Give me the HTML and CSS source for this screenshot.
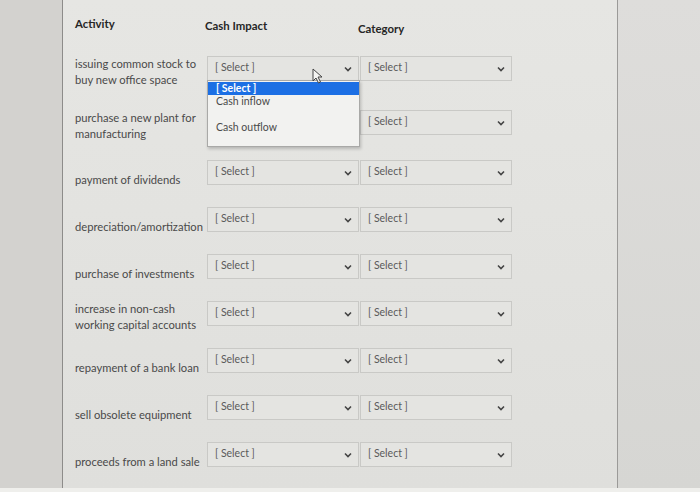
FILE: index.html
```html
<!DOCTYPE html>
<html lang="en">

<head>
    <meta charset="UTF-8">
    <meta name="viewport" content="width=device-width, initial-scale=1.0">
    <title>Cash Flow Activities</title>
    <link rel="stylesheet" href="styles.css">
</head>

<body>
    <div class="screen">
        <div class="panel">
            <div class="row header">
                <div class="col-title">Activity</div>
                <div class="col-title shift">Cash Impact</div>
                <div class="col-title shift cat">Category</div>
            </div>

            <div class="row first">
                <div class="label two">issuing common stock to<br>buy new office space</div>
                <div class="select open">
                    <span>[ Select ]</span>
                    <svg class="chev" viewBox="0 0 8 6"><polyline points="1,1.5 4,4.5 7,1.5"/></svg>
                    <svg class="cursor" viewBox="0 0 11 16"><path d="M1 1 L1 13 L4 10 L6.5 15 L8.5 14 L6 9 L10 9 Z"/></svg>
                    <ul class="dropdown">
                        <li class="active">[ Select ]</li>
                        <li>Cash inflow</li>
                        <li class="gap">Cash outflow</li>
                    </ul>
                </div>
                <div class="select">
                    <span>[ Select ]</span>
                    <svg class="chev" viewBox="0 0 8 6"><polyline points="1,1.5 4,4.5 7,1.5"/></svg>
                </div>
            </div>

            <div class="row second">
                <div class="label two">purchase a new plant for<br>manufacturing</div>
                <div class="select covered">
                    <span>[ Select ]</span>
                    <svg class="chev" viewBox="0 0 8 6"><polyline points="1,1.5 4,4.5 7,1.5"/></svg>
                </div>
                <div class="select">
                    <span>[ Select ]</span>
                    <svg class="chev" viewBox="0 0 8 6"><polyline points="1,1.5 4,4.5 7,1.5"/></svg>
                </div>
            </div>

            <div class="row">
                <div class="label">payment of dividends</div>
                <div class="select">
                    <span>[ Select ]</span>
                    <svg class="chev" viewBox="0 0 8 6"><polyline points="1,1.5 4,4.5 7,1.5"/></svg>
                </div>
                <div class="select">
                    <span>[ Select ]</span>
                    <svg class="chev" viewBox="0 0 8 6"><polyline points="1,1.5 4,4.5 7,1.5"/></svg>
                </div>
            </div>

            <div class="row">
                <div class="label">depreciation/amortization</div>
                <div class="select">
                    <span>[ Select ]</span>
                    <svg class="chev" viewBox="0 0 8 6"><polyline points="1,1.5 4,4.5 7,1.5"/></svg>
                </div>
                <div class="select">
                    <span>[ Select ]</span>
                    <svg class="chev" viewBox="0 0 8 6"><polyline points="1,1.5 4,4.5 7,1.5"/></svg>
                </div>
            </div>

            <div class="row">
                <div class="label">purchase of investments</div>
                <div class="select">
                    <span>[ Select ]</span>
                    <svg class="chev" viewBox="0 0 8 6"><polyline points="1,1.5 4,4.5 7,1.5"/></svg>
                </div>
                <div class="select">
                    <span>[ Select ]</span>
                    <svg class="chev" viewBox="0 0 8 6"><polyline points="1,1.5 4,4.5 7,1.5"/></svg>
                </div>
            </div>

            <div class="row">
                <div class="label two">increase in non-cash<br>working capital accounts</div>
                <div class="select">
                    <span>[ Select ]</span>
                    <svg class="chev" viewBox="0 0 8 6"><polyline points="1,1.5 4,4.5 7,1.5"/></svg>
                </div>
                <div class="select">
                    <span>[ Select ]</span>
                    <svg class="chev" viewBox="0 0 8 6"><polyline points="1,1.5 4,4.5 7,1.5"/></svg>
                </div>
            </div>

            <div class="row">
                <div class="label">repayment of a bank loan</div>
                <div class="select">
                    <span>[ Select ]</span>
                    <svg class="chev" viewBox="0 0 8 6"><polyline points="1,1.5 4,4.5 7,1.5"/></svg>
                </div>
                <div class="select">
                    <span>[ Select ]</span>
                    <svg class="chev" viewBox="0 0 8 6"><polyline points="1,1.5 4,4.5 7,1.5"/></svg>
                </div>
            </div>

            <div class="row">
                <div class="label">sell obsolete equipment</div>
                <div class="select">
                    <span>[ Select ]</span>
                    <svg class="chev" viewBox="0 0 8 6"><polyline points="1,1.5 4,4.5 7,1.5"/></svg>
                </div>
                <div class="select">
                    <span>[ Select ]</span>
                    <svg class="chev" viewBox="0 0 8 6"><polyline points="1,1.5 4,4.5 7,1.5"/></svg>
                </div>
            </div>

            <div class="row">
                <div class="label">proceeds from a land sale</div>
                <div class="select">
                    <span>[ Select ]</span>
                    <svg class="chev" viewBox="0 0 8 6"><polyline points="1,1.5 4,4.5 7,1.5"/></svg>
                </div>
                <div class="select">
                    <span>[ Select ]</span>
                    <svg class="chev" viewBox="0 0 8 6"><polyline points="1,1.5 4,4.5 7,1.5"/></svg>
                </div>
            </div>
        </div>
    </div>
    <div class="bezel"></div>
</body>

</html>
```

FILE: styles.css
```css
body {
    margin: 0;
    padding: 0;
    font-family: 'Lato', 'Liberation Sans', sans-serif;
    background: linear-gradient(to bottom, #d6d5d2, #c6c5c2);
    color: #3c3c3c;
}

.screen {
    display: flex;
    height: 488px;
    background: linear-gradient(to right, #d3d2cf 0, #d3d2cf 62px, transparent 62px),
        linear-gradient(to bottom, #dedddb, #d6d6d3);
    overflow: hidden;
}

.panel {
    margin-left: 62px;
    width: 556px;
    padding-left: 12px;
    box-sizing: border-box;
    background: linear-gradient(to bottom, #e6e6e3, #dfdfdc);
    border-left: 1px solid #8d8c8a;
    border-right: 1px solid #9b9a98;
}

.bezel {
    height: 4px;
    background: #efefec;
}

.row {
    display: grid;
    grid-template-columns: 131px 152px 152px;
    column-gap: 1px;
    height: 47px;
    align-items: start;
}

.row.header {
    height: 56px;
    padding-top: 17px;
    box-sizing: border-box;
    align-items: start;
}

.row.first {
    height: 54px;
}

.row.second {
    height: 50px;
}

.col-title {
    font-size: 11.4px;
    font-weight: 700;
    color: #262626;
}

.col-title.shift {
    margin-left: -2px;
    padding-top: 2px;
}

.col-title.cat {
    padding-top: 5px;
}

.label {
    font-size: 11.2px;
    line-height: 16px;
    color: #4a4a4a;
    padding-top: 12px;
    white-space: nowrap;
}

.label.two {
    padding-top: 0;
}

.select {
    position: relative;
    height: 25px;
    box-sizing: border-box;
    border: 1px solid #c9c9c6;
    background: #e4e4e1;
    display: flex;
    align-items: flex-start;
    justify-content: space-between;
    padding: 3px 6px 0 7px;
    font-size: 10.5px;
    line-height: 14px;
    color: #5a5a5a;
}

.select.covered span {
    visibility: hidden;
}

.chev {
    width: 8px;
    height: 6px;
    margin-top: 6px;
    fill: none;
    stroke: #444;
    stroke-width: 1.6;
}

.cursor {
    position: absolute;
    left: 104px;
    top: 11px;
    width: 11px;
    height: 16px;
    fill: #f4f4f2;
    stroke: #444;
    stroke-width: 1;
    z-index: 3;
}

.dropdown {
    position: absolute;
    top: 23px;
    left: -1px;
    width: 151px;
    height: 64px;
    margin: 0;
    padding: 1px 0 0;
    list-style: none;
    background: #f2f2f0;
    border: 1px solid #a9a9a7;
    box-shadow: 1px 2px 3px rgba(0, 0, 0, 0.2);
    z-index: 2;
}

.dropdown li {
    padding-left: 8px;
    font-size: 10.5px;
    line-height: 12px;
    color: #4a4a4a;
}

.dropdown li.active {
    background: #1c6fe4;
    color: #fff;
    line-height: 13px;
    font-weight: 700;
}

.dropdown li.gap {
    margin-top: 14px;
}
```
